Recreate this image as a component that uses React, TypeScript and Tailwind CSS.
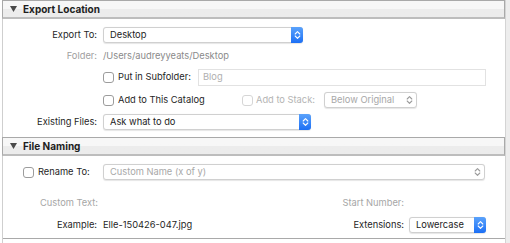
import React from "react";

const font = { fontFamily: "Inter, 'Liberation Sans', sans-serif" };

function Chevrons({ color }: { color: string }) {
  return (
    <svg width="7" height="10" viewBox="0 0 7 10" fill="none">
      <path d="M1.2 4 L3.5 1.7 L5.8 4" stroke={color} strokeWidth="1.1" strokeLinecap="round" strokeLinejoin="round" />
      <path d="M1.2 6 L3.5 8.3 L5.8 6" stroke={color} strokeWidth="1.1" strokeLinecap="round" strokeLinejoin="round" />
    </svg>
  );
}

function Select({ text, width, active = true, disabled = false }: { text: string; width: string; active?: boolean; disabled?: boolean }) {
  return (
    <div className={`${width} shrink-0 h-[16px] flex items-stretch rounded-[3px] border border-[#d0d0d0] bg-white shadow-[0_0.5px_1px_rgba(0,0,0,0.1)]`}>
      <div className={`flex-1 flex items-center pl-[6px] text-[9.3px] whitespace-nowrap ${disabled ? "text-[#a8a8a8]" : "text-[#1c1c1c]"}`}>{text}</div>
      {active ? (
        <div className="w-[12px] -my-px -mr-px rounded-r-[3px] bg-gradient-to-b from-[#5aa2fb] to-[#1b6ff5] flex items-center justify-center">
          <Chevrons color="#ffffff" />
        </div>
      ) : (
        <div className="w-[13px] flex items-center justify-center">
          <Chevrons color="#9a9a9a" />
        </div>
      )}
    </div>
  );
}

function Checkbox({ disabled = false }: { disabled?: boolean }) {
  return (
    <div className={`w-[11px] h-[11px] shrink-0 rounded-[3px] border bg-white ${disabled ? "border-[#d6d6d6]" : "border-[#9c9c9c]"}`} />
  );
}

function Header({ title }: { title: string }) {
  return (
    <div className="h-[19px] shrink-0 flex items-center border border-[#a9a9a9] border-b-[2px] border-b-[#bdbdbd] bg-gradient-to-b from-[#f7f7f7] from-50% to-[#ececec] to-50%">
      <svg width="7" height="6" viewBox="0 0 7 6" className="ml-[7px] mr-[6px]">
        <path d="M0 0 H7 L3.5 6 Z" fill="#4a4a4a" />
      </svg>
      <span className="text-[10px] font-bold text-[#1e1e1e]">{title}</span>
    </div>
  );
}

const label = "text-[9.3px] whitespace-nowrap";

export default function App() {
  return (
    <div className="w-[510px] h-[243px] bg-white flex overflow-hidden" style={font}>
      <div className="w-[505px] pl-[2px] flex flex-col">
        <Header title="Export Location" />
        <div className="border-l border-[#cfcfcf] flex flex-col pb-[7px]">
          <div className="h-[16px] mt-[8px] flex items-center">
            <div className={`w-[100px] shrink-0 text-right pr-[6px] text-[#1f1f1f] ${label}`}>Export To:</div>
            <Select text="Desktop" width="w-[200px]" />
          </div>
          <div className="h-[16px] mt-[5px] flex items-center">
            <div className={`w-[100px] shrink-0 text-right pr-[6px] text-[#a0a0a0] ${label}`}>Folder:</div>
            <div className={`text-[#8a8a8a] ${label}`}>/Users/audreyyeats/Desktop</div>
          </div>
          <div className="h-[16px] mt-[5px] flex items-center">
            <div className="w-[100px] shrink-0" />
            <Checkbox />
            <div className={`ml-[4px] w-[80px] shrink-0 text-[#1f1f1f] ${label}`}>Put in Subfolder:</div>
            <div className={`h-[17px] w-[288px] shrink-0 border border-[#e2e2e2] bg-white flex items-center pl-[4px] text-[#b0b0b0] ${label}`}>Blog</div>
          </div>
          <div className="h-[16px] mt-[7px] flex items-center">
            <div className="w-[100px] shrink-0" />
            <Checkbox />
            <div className={`ml-[4px] w-[124px] shrink-0 text-[#1f1f1f] ${label}`}>Add to This Catalog</div>
            <Checkbox disabled />
            <div className={`ml-[3px] w-[68px] shrink-0 text-[#b4b4b4] ${label}`}>Add to Stack:</div>
            <Select text="Below Original" width="w-[93px]" active={false} disabled />
          </div>
          <div className="h-[16px] mt-[6px] flex items-center">
            <div className={`w-[100px] shrink-0 text-right pr-[6px] text-[#1f1f1f] ${label}`}>Existing Files:</div>
            <Select text="Ask what to do" width="w-[208px]" />
          </div>
        </div>
        <Header title="File Naming" />
        <div className="border-l border-[#cfcfcf] flex flex-col flex-1">
          <div className="h-[16px] mt-[8px] flex items-center">
            <div className="w-[20px] shrink-0" />
            <Checkbox />
            <div className={`ml-[4px] w-[65px] shrink-0 text-[#1f1f1f] ${label}`}>Rename To:</div>
            <Select text="Custom Name (x of y)" width="w-[382px]" active={false} disabled />
          </div>
          <div className="h-[16px] mt-[15px] flex items-center">
            <div className="w-[401px] shrink-0 pl-[37px] flex justify-between">
              <div className={`text-[#a6a6a6] ${label}`}>Custom Text:</div>
              <div className={`text-[#a6a6a6] ${label}`}>Start Number:</div>
            </div>
          </div>
          <div className="h-[16px] mt-[6px] flex items-center">
            <div className="w-[401px] shrink-0 flex items-center">
              <div className={`w-[100px] shrink-0 text-right pr-[6px] text-[#1f1f1f] ${label}`}>Example:</div>
              <div className={`flex-1 text-[#1f1f1f] ${label}`}>Elle-150426-047.jpg</div>
              <div className={`text-[#1f1f1f] ${label}`}>Extensions:</div>
            </div>
            <div className="ml-[5px]">
              <Select text="Lowercase" width="w-[77px]" />
            </div>
          </div>
          <div className="mt-[5px] border-t border-[#a9a9a9]" />
        </div>
      </div>
      <div className="w-[5px] flex">
        <div className="w-[1px] bg-[#d4d4d4]" />
        <div className="flex-1 bg-[#ededed]" />
      </div>
    </div>
  );
}
